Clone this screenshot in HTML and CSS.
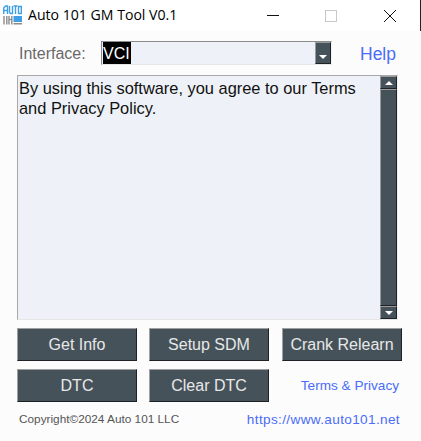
FILE: index.html
```html
<!DOCTYPE html>
<html lang="en">
<head>
<meta charset="utf-8">
<title>Auto 101 GM Tool V0.1</title>
<link rel="stylesheet" href="styles.css">
</head>
<body>
<div class="window">
  <header class="titlebar">
    <svg class="app-icon" width="19" height="20" viewBox="0 0 19 20" aria-hidden="true">
      <g fill="none" stroke="#3f9ee6" stroke-width="1.4">
        <path d="M0.7 9V3L2.5 1H4.5V9M0.7 5.5H4.5"/>
        <path d="M6.5 1V7.5L7.5 8.5H9.5V1"/>
        <path d="M10.5 1H14.5M12.5 1V9"/>
        <path d="M15.5 8.5V1.5H18.3V8.5Z"/>
      </g>
      <g fill="none" stroke="#8c8c8c" stroke-width="1.4">
        <path d="M1 11V19.5M3.8 11V19.5"/>
        <path d="M6 11V19.5M8.8 11V19.5"/>
        <path d="M6 14.5H8.8"/>
      </g>
      <rect x="10.5" y="11" width="8.5" height="6" fill="#3f9ee6"/>
      <rect x="10.5" y="18" width="8.5" height="1.5" fill="#8c8c8c"/>
    </svg>
    <span class="title">Auto 101 GM Tool V0.1</span>
    <div class="controls">
      <svg class="min-icon" width="12" height="12" viewBox="0 0 12 12" aria-hidden="true"><path d="M0 5.5H12" stroke="#111" stroke-width="1"/></svg>
      <svg width="12" height="12" viewBox="0 0 12 12" aria-hidden="true"><rect x="0.5" y="0.5" width="11" height="11" fill="none" stroke="#c8c8c8"/></svg>
      <svg width="12" height="12" viewBox="0 0 12 12" aria-hidden="true"><path d="M0 0L12 12M12 0L0 12" stroke="#111" stroke-width="1"/></svg>
    </div>
  </header>
  <main class="content">
    <div class="iface-row">
      <label class="iface-label">Interface:</label>
      <div class="combo">
        <span class="combo-value"><span class="selected">VCI</span></span>
        <span class="arrow-btn combo-btn"><i class="tri-down"></i></span>
      </div>
      <a class="help">Help</a>
    </div>
    <div class="textbox">
      <p class="textbox-text">By using this software, you agree to our Terms and Privacy Policy.</p>
      <div class="scrollbar">
        <span class="arrow-btn scroll-btn"><i class="tri-up"></i></span>
        <span class="scroll-track"></span>
        <span class="arrow-btn scroll-btn"><i class="tri-down"></i></span>
      </div>
    </div>
    <div class="actions">
      <button class="btn">Get Info</button>
      <button class="btn">Setup SDM</button>
      <button class="btn">Crank Relearn</button>
      <button class="btn">DTC</button>
      <button class="btn">Clear DTC</button>
      <a class="terms">Terms &amp; Privacy</a>
    </div>
    <footer class="footer">
      <span class="copyright">Copyright©2024 Auto 101 LLC</span>
      <a class="site">https://www.auto101.net</a>
    </footer>
  </main>
</div>
</body>
</html>
```
FILE: styles.css
```css
* { box-sizing: border-box; }
html, body { margin: 0; height: 100%; }
body { background: #fcfcfd; font-family: "Liberation Sans", Arial, sans-serif; overflow: hidden; }
.window { width: 421px; height: 441px; display: flex; flex-direction: column; }
.titlebar {
  height: 31px; background: #fff; display: flex; align-items: center;
  border-right: 1px solid #222; padding-left: 3px; flex: none;
}
.app-icon { flex: none; margin-right: 6px; margin-top: -1px; }
.title { font-family: "Open Sans", sans-serif; font-size: 14.1px; color: #000; white-space: nowrap; margin-top: -2px; }
.controls { margin-left: auto; display: flex; align-items: center; gap: 47px; padding-right: 24px; }
.controls svg { display: block; }
.controls .min-icon { margin-right: -1px; }
.content { flex: 1; padding: 10px 19px 0 17px; display: flex; flex-direction: column; }
.iface-row { display: flex; align-items: center; height: 24px; }
.iface-label { width: 84px; padding: 2px 0 0 2px; font-size: 16px; color: #6a6a6a; }
.combo {
  width: 231px; height: 24px; display: flex; background: #eef1f7;
  border: 1px solid; border-color: #8a8a8a #f2f2f2 #e6e6e6 #8a8a8a;
}
.combo-value { flex: 1; display: flex; align-items: center; padding-left: 1px; font-size: 16px; }
.selected { background: #000; color: #fff; height: 22px; line-height: 23px; width: 28px; }
.arrow-btn {
  display: flex; align-items: center; justify-content: center; background: #46525a;
  border: 1px solid; border-color: #9a9a9a #1e2226 #1e2226 #9a9a9a;
}
.combo-btn { width: 16px; align-items: flex-end; padding-bottom: 4px; }
.tri-down, .tri-up { display: block; width: 0; height: 0; border-left: 4px solid transparent; border-right: 4px solid transparent; }
.tri-down { border-top: 4px solid #fff; }
.tri-up { border-bottom: 4px solid #fff; }
.help { margin-left: 28px; padding-top: 2px; font-size: 17.5px; color: #4a6cf7; }
.textbox {
  margin-top: 10px; width: 381px; height: 245px; display: flex; background: #eef1f7;
  border: 1px solid; border-color: #a8a8a8 transparent #e6e6e6 #a8a8a8;
}
.textbox-text { flex: 1; margin: 0; padding: 2px 20px 0 1px; font-size: 16.4px; line-height: 20px; color: #111; }
.scrollbar { width: 17px; display: flex; flex-direction: column; }
.scroll-btn { height: 13px; flex: none; }
.scroll-track { flex: 1; background: #46525a; border: 1px solid; border-color: #9a9a9a #1e2226 #1e2226 #9a9a9a; }
.actions {
  margin-top: 8px; display: grid; grid-template-columns: 132px 133px 120px;
  row-gap: 8px; grid-auto-rows: 33px; align-items: stretch;
}
.btn {
  width: 120px; font: 16px "Liberation Sans", Arial, sans-serif; color: #e8e8e8; background: #46525a; padding: 0;
  border: 1px solid; border-color: #a0a0a0 #1e2226 #1e2226 #a0a0a0;
}
.terms { align-self: center; justify-self: end; margin-right: 3px; font-size: 13.6px; color: #4a6cf7; }
.footer { margin-top: 10px; display: flex; justify-content: space-between; align-items: flex-start; padding: 0 2px; }
.copyright { font-size: 11.8px; color: #555; }
.site { font-size: 13.6px; letter-spacing: 0.35px; color: #4a6cf7; }
```
